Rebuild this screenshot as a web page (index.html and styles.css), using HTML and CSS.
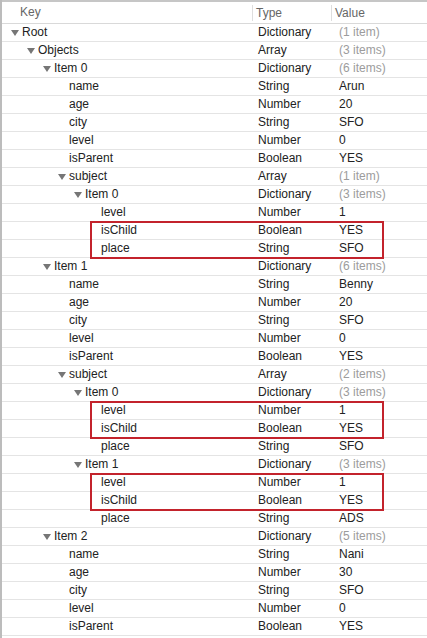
FILE: index.html
```html
<!DOCTYPE html>
<html>
<head>
<meta charset="utf-8">
<link rel="stylesheet" href="styles.css">
</head>
<body>
<div class="outline">
  <div class="head">
    <div class="hk">Key</div>
    <div class="ht">Type</div>
    <div class="hv">Value</div>
  </div>
  <div class="row"><div class="key l0 open">Root</div><div class="type">Dictionary</div><div class="val dim">(1 item)</div></div>
  <div class="row"><div class="key l1 open">Objects</div><div class="type">Array</div><div class="val dim">(3 items)</div></div>
  <div class="row"><div class="key l2 open">Item 0</div><div class="type">Dictionary</div><div class="val dim">(6 items)</div></div>
  <div class="row"><div class="key l3">name</div><div class="type">String</div><div class="val">Arun</div></div>
  <div class="row"><div class="key l3">age</div><div class="type">Number</div><div class="val">20</div></div>
  <div class="row"><div class="key l3">city</div><div class="type">String</div><div class="val">SFO</div></div>
  <div class="row"><div class="key l3">level</div><div class="type">Number</div><div class="val">0</div></div>
  <div class="row"><div class="key l3">isParent</div><div class="type">Boolean</div><div class="val">YES</div></div>
  <div class="row"><div class="key l3 open">subject</div><div class="type">Array</div><div class="val dim">(1 item)</div></div>
  <div class="row"><div class="key l4 open">Item 0</div><div class="type">Dictionary</div><div class="val dim">(3 items)</div></div>
  <div class="row"><div class="key l5">level</div><div class="type">Number</div><div class="val">1</div></div>
  <div class="row mark"><div class="key l5">isChild</div><div class="type">Boolean</div><div class="val">YES</div></div>
  <div class="row"><div class="key l5">place</div><div class="type">String</div><div class="val">SFO</div></div>
  <div class="row"><div class="key l2 open">Item 1</div><div class="type">Dictionary</div><div class="val dim">(6 items)</div></div>
  <div class="row"><div class="key l3">name</div><div class="type">String</div><div class="val">Benny</div></div>
  <div class="row"><div class="key l3">age</div><div class="type">Number</div><div class="val">20</div></div>
  <div class="row"><div class="key l3">city</div><div class="type">String</div><div class="val">SFO</div></div>
  <div class="row"><div class="key l3">level</div><div class="type">Number</div><div class="val">0</div></div>
  <div class="row"><div class="key l3">isParent</div><div class="type">Boolean</div><div class="val">YES</div></div>
  <div class="row"><div class="key l3 open">subject</div><div class="type">Array</div><div class="val dim">(2 items)</div></div>
  <div class="row"><div class="key l4 open">Item 0</div><div class="type">Dictionary</div><div class="val dim">(3 items)</div></div>
  <div class="row mark"><div class="key l5">level</div><div class="type">Number</div><div class="val">1</div></div>
  <div class="row"><div class="key l5">isChild</div><div class="type">Boolean</div><div class="val">YES</div></div>
  <div class="row"><div class="key l5">place</div><div class="type">String</div><div class="val">SFO</div></div>
  <div class="row"><div class="key l4 open">Item 1</div><div class="type">Dictionary</div><div class="val dim">(3 items)</div></div>
  <div class="row mark"><div class="key l5">level</div><div class="type">Number</div><div class="val">1</div></div>
  <div class="row"><div class="key l5">isChild</div><div class="type">Boolean</div><div class="val">YES</div></div>
  <div class="row"><div class="key l5">place</div><div class="type">String</div><div class="val">ADS</div></div>
  <div class="row"><div class="key l2 open">Item 2</div><div class="type">Dictionary</div><div class="val dim">(5 items)</div></div>
  <div class="row"><div class="key l3">name</div><div class="type">String</div><div class="val">Nani</div></div>
  <div class="row"><div class="key l3">age</div><div class="type">Number</div><div class="val">30</div></div>
  <div class="row"><div class="key l3">city</div><div class="type">String</div><div class="val">SFO</div></div>
  <div class="row"><div class="key l3">level</div><div class="type">Number</div><div class="val">0</div></div>
  <div class="row"><div class="key l3">isParent</div><div class="type">Boolean</div><div class="val">YES</div></div>
</div>
</body>
</html>
```

FILE: styles.css
```css
html, body {
  margin: 0;
  padding: 0;
  background: #ffffff;
}

body {
  width: 427px;
  height: 638px;
  overflow: hidden;
  font-family: "Liberation Sans", Arial, sans-serif;
  font-size: 12px;
  color: #222222;
}

.outline {
  border-left: 2px solid #bcbcbc;
  min-height: 638px;
  box-sizing: border-box;
}

.head {
  display: grid;
  grid-template-columns: 250px 79px 1fr;
  height: 21px;
  border-top: 2px solid #c6c6c6;
  border-bottom: 1px solid #d9d9d9;
  line-height: 21px;
  color: #666666;
}

.hk {
  padding-left: 18px;
}

.ht,
.hv {
  align-self: center;
  height: 16px;
  line-height: 16px;
  border-left: 1px solid #dedede;
  padding-left: 3px;
}

.row {
  display: grid;
  grid-template-columns: 250px 79px 1fr;
  height: 17px;
  line-height: 17px;
  border-bottom: 1px solid #e4e4e4;
  white-space: nowrap;
}

.key {
  display: flex;
  align-items: center;
}

.open::before {
  content: "";
  width: 0;
  height: 0;
  border-left: 4px solid transparent;
  border-right: 4px solid transparent;
  border-top: 6px solid #767676;
  margin-right: 3px;
  margin-top: 1px;
}

.l0 { padding-left: 9px; }
.l1 { padding-left: 25px; }
.l2 { padding-left: 41px; }
.l3 { padding-left: 67px; }
.l3.open { padding-left: 56px; }
.l4.open { padding-left: 72px; }
.l5 { padding-left: 99px; }

.type {
  padding-left: 6px;
}

.val {
  padding-left: 8px;
}

.dim {
  color: #9c9c9c;
}

.mark {
  position: relative;
}

.mark::after {
  content: "";
  position: absolute;
  left: 88px;
  top: -1px;
  width: 294px;
  height: 38px;
  border: 2px solid #c3232c;
  box-sizing: border-box;
  pointer-events: none;
}
```
